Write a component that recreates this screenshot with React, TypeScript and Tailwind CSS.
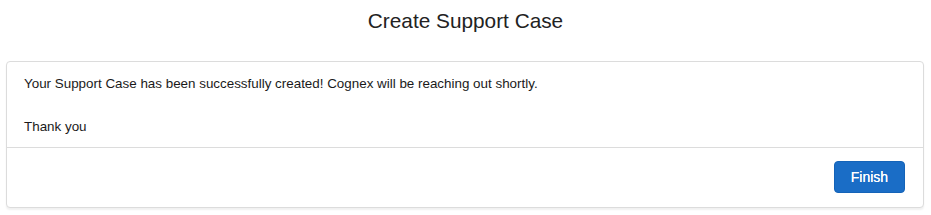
export default function App() {
  return (
    <div className="min-h-[215px] w-[931px] bg-white font-['Liberation_Sans',Arial,sans-serif] text-[#181818]">
      <h1 className="pt-[8px] text-center text-[20.8px] leading-[26px] text-[#222]">Create Support Case</h1>

      <div className="mx-[6px] mt-[27px] w-[918px] rounded-[4px] border border-[#dcdcdc] bg-white shadow-[0_2px_2px_rgba(0,0,0,0.06)]">
        <div className="px-[17px] pt-[13px] pb-[11px] text-[13.4px] leading-[18px] text-[#1a1a1a]">
          <p>Your Support Case has been successfully created! Cognex will be reaching out shortly.</p>
          <p className="mt-[25px]">Thank you</p>
        </div>
        <div className="flex justify-end border-t border-[#dcdcdc] px-[18px] pt-[13px] pb-[14px]">
          <button className="h-[32px] w-[71px] rounded-[4px] border border-[#1463b8] bg-[#1a6dc6] text-[14px] text-white [text-shadow:0_0_0.4px_#fff]">
            Finish
          </button>
        </div>
      </div>
    </div>
  );
}
